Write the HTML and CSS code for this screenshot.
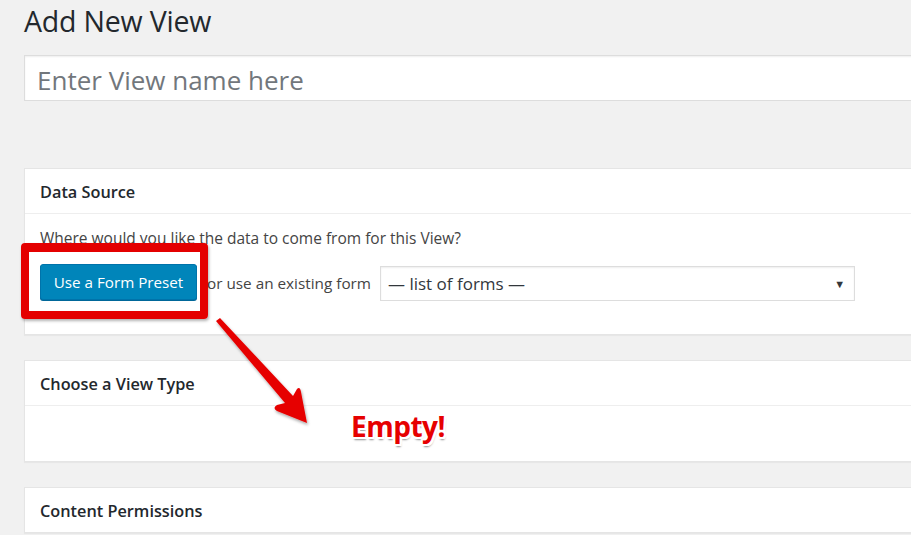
FILE: index.html
```html
<!DOCTYPE html>
<html>
<head>
<meta charset="utf-8">
<link rel="stylesheet" href="styles.css">
</head>
<body>
<div class="wrap">
  <h1 class="title">Add New View</h1>
  <div class="name-input">Enter View name here</div>

  <div class="panel panel-source">
    <h2 class="panel-head">Data Source</h2>
    <div class="panel-body">
      <p class="question">Where would you like the data to come from for this View?</p>
      <div class="source-row">
        <span class="btn">Use a Form Preset</span>
        <span class="or">or use an existing form</span>
        <span class="select">— list of forms —<span class="caret">▼</span></span>
      </div>
    </div>
  </div>

  <div class="panel panel-type">
    <h2 class="panel-head">Choose a View Type</h2>
    <div class="panel-body empty-body"></div>
  </div>

  <div class="panel panel-perm">
    <h2 class="panel-head">Content Permissions</h2>
  </div>
</div>

<div class="highlight"></div>
<svg class="arrow" width="911" height="535" viewBox="0 0 911 535">
  <defs>
    <filter id="sh" x="-20%" y="-20%" width="140%" height="140%">
      <feDropShadow dx="1" dy="2" stdDeviation="1.5" flood-color="#000" flood-opacity="0.35"/>
    </filter>
  </defs>
  <path filter="url(#sh)" fill="#e60000" d="M216 321 L220 318 L293 396 L297 389 Q300 386 301 392 L307 423 L277 411 Q272 408 277 405 L285 403 Z"/>
</svg>
<div class="empty-label">Empty!</div>
</body>
</html>
```
FILE: styles.css
```css
html, body {
  margin: 0;
  padding: 0;
}
body {
  background: #f1f1f1;
  font-family: "Open Sans", "Noto Sans", sans-serif;
  color: #444;
  overflow: hidden;
  width: 911px;
  height: 535px;
  position: relative;
}
.wrap {
  padding-left: 24px;
  width: 1000px;
}
.title {
  margin: 0;
  font-size: 28.5px;
  font-weight: 400;
  line-height: 42px;
  color: #23282d;
  letter-spacing: -0.2px;
}
.name-input {
  margin-top: 13px;
  height: 44px;
  border: 1px solid #ddd;
  background: #fff;
  box-shadow: inset 0 1px 2px rgba(0,0,0,.07);
  font-size: 26px;
  line-height: 48px;
  padding-left: 12px;
  color: #72777c;
}
.panel {
  background: #fff;
  border: 1px solid #e5e5e5;
  box-shadow: 0 1px 1px rgba(0,0,0,.04);
}
.panel-source { margin-top: 67px; }
.panel-type { margin-top: 25px; }
.panel-perm { margin-top: 25px; }
.panel-head {
  margin: 0;
  height: 44px;
  line-height: 46px;
  padding-left: 15px;
  font-size: 16.3px;
  font-weight: 600;
  color: #23282d;
  border-bottom: 1px solid #eee;
}
.panel-perm .panel-head { border-bottom: none; }
.panel-body {
  padding: 13px 15px 0;
  height: 107px;
}
.empty-body { height: 42px; }
.question {
  margin: 0;
  font-size: 15.5px;
  line-height: 22px;
  color: #444;
}
.source-row {
  display: flex;
  align-items: center;
  margin-top: 13px;
}
.btn {
  box-sizing: border-box;
  width: 157px;
  height: 36px;
  background: #0085ba;
  border: 1px solid #0073aa;
  border-radius: 3px;
  box-shadow: 0 1px 0 #006799;
  color: #fff;
  font-size: 15.2px;
  display: flex;
  align-items: center;
  justify-content: center;
}
.or {
  margin-left: 10px;
  font-size: 15.3px;
  color: #444;
  position: relative;
  top: 1px;
}
.select {
  box-sizing: border-box;
  margin-left: 9px;
  width: 475px;
  height: 35px;
  margin-top: 4px;
  border: 1px solid #ddd;
  box-shadow: inset 0 1px 2px rgba(0,0,0,.07);
  background: #fff;
  font-size: 17px;
  color: #32373c;
  padding-left: 7px;
  display: flex;
  align-items: center;
  justify-content: space-between;
}
.caret {
  font-size: 11px;
  color: #32373c;
  margin-right: 9px;
}
.highlight {
  position: absolute;
  left: 21px;
  top: 243px;
  width: 171px;
  height: 59px;
  border: 8px solid #e40000;
  border-top-width: 9px;
  border-radius: 4px;
  box-shadow: 1px 2px 3px rgba(0,0,0,.3);
}
.arrow {
  position: absolute;
  left: 0;
  top: 0;
}
.empty-label {
  position: absolute;
  left: 351px;
  top: 408px;
  font-family: "Open Sans", sans-serif;
  font-weight: 700;
  font-size: 28px;
  line-height: 36px;
  color: #e60000;
  letter-spacing: -0.5px;
  text-shadow: -2px 0 #fff, 2px 0 #fff, 0 -2px #fff, 0 2px #fff, -2px -2px #fff, 2px 2px #fff, -2px 2px #fff, 2px -2px #fff, 1px 3px 2px rgba(0,0,0,.45);
}
```
